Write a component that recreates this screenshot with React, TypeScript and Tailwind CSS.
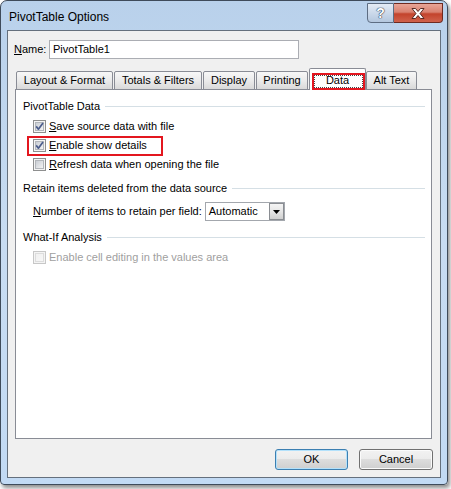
import React from "react";

interface CheckProps {
  checked?: boolean;
  disabled?: boolean;
  id: string;
}

const Check = ({ checked = false, disabled = false, id }: CheckProps) => (
  <svg width="13" height="13" viewBox="0 0 13 13" className="shrink-0">
    <defs>
      <linearGradient id={id} x1="0" y1="0" x2="1" y2="1">
        <stop offset="0" stopColor={disabled ? "#f0f0f0" : "#c6cbd2"} />
        <stop offset="1" stopColor={disabled ? "#f7f7f7" : "#f6f6f6"} />
      </linearGradient>
    </defs>
    <rect x="0.5" y="0.5" width="12" height="12" fill="#f4f4f4" stroke={disabled ? "#c7c7c7" : "#8e8f8f"} />
    <rect x="2.5" y="2.5" width="8" height="8" fill={`url(#${id})`} stroke={disabled ? "#dcdcdc" : "#b2b6bb"} />
    {checked && (
      <path d="M3.2 6.4 L5.4 9.2 L10 3" stroke="#4a5c8c" strokeWidth="1.7" fill="none" strokeLinejoin="round" />
    )}
  </svg>
);

const Group = ({ title, className = "" }: { title: string; className?: string }) => (
  <div className={`flex items-center h-[14px] pl-[7px] pr-[6px] ${className}`}>
    <span className="whitespace-nowrap">{title}</span>
    <div className="ml-[5px] flex-1 h-px bg-[#d5dfe5]" />
  </div>
);

const Tab = ({ label, w, className = "" }: { label: string; w: string; className?: string }) => (
  <div
    className={`${w} h-[19px] border border-[#898c95] rounded-t-[2px] bg-gradient-to-b from-[#f7f7f7] via-[#ebebeb] to-[#d9d9d9] flex items-center justify-center ${className}`}
  >
    {label}
  </div>
);

export default function App() {
  return (
    <div className="w-[451px] h-[489px] bg-white font-['Liberation_Sans',Arial,sans-serif] text-[11px] text-black leading-none">
      <div className="w-[448px] h-[485px] rounded-t-[7px] rounded-b-[4px] border border-[#3f4b5a] bg-gradient-to-b from-[#b9d1eb] via-[#c8dcf2] to-[#c2daf4] shadow-[2px_3px_4px_rgba(0,0,0,0.45)] flex flex-col">
        {/* title bar */}
        <div className="h-[29px] flex items-start shrink-0">
          <span className="mt-[10px] ml-[8px] text-[12px]">PivotTable Options</span>
          <div className="ml-auto mr-[4px] mt-[2px] flex">
            <div className="w-[27px] h-[20px] border border-[#5d6d82] rounded-bl-[4px] bg-gradient-to-b from-[#e4ecf6] via-[#cbd9ea] to-[#b4c7de] flex items-center justify-center">
              <span className="text-white font-bold text-[14px] [text-shadow:0_0_1px_#2b3a4e,0_0_1px_#2b3a4e,0_0_1px_#2b3a4e]">?</span>
            </div>
            <div className="w-[49px] h-[20px] border border-l-0 border-[#6e2a20] rounded-br-[4px] bg-[linear-gradient(to_bottom,#e8a597_0%,#d98170_45%,#c3432c_55%,#d0624c_100%)] flex items-center justify-center">
              <svg width="16" height="13" viewBox="0 0 16 13">
                <path
                  d="M2 1.5 H5.5 L8 4.5 L10.5 1.5 H14 L10 6.5 L14 11.5 H10.5 L8 8.5 L5.5 11.5 H2 L6 6.5 Z"
                  fill="#ffffff"
                  stroke="#4a1c16"
                  strokeWidth="0.9"
                  strokeLinejoin="round"
                />
              </svg>
            </div>
          </div>
        </div>

        {/* client area */}
        <div className="flex-1 flex flex-col px-[6px] pb-[6px]">
          <div className="flex-1 border border-[#65707d] bg-[#f0f0f0] flex flex-col">
            <div className="mt-[9px] flex items-center h-[19px] pl-[6px]">
              <span className="w-[35px]">
                <span className="underline">N</span>ame:
              </span>
              <div className="w-[250px] h-[19px] border border-[#abadb3] bg-white flex items-center pl-[3px]">
                PivotTable1
              </div>
            </div>

            {/* tabs */}
            <div className="mt-[9px] -mb-px h-[22px] flex items-end gap-[1px] pl-[8px] relative z-10">
              <Tab label="Layout & Format" w="w-[97px]" />
              <Tab label="Totals & Filters" w="w-[88px]" />
              <Tab label="Display" w="w-[52px]" />
              <Tab label="Printing" w="w-[52px]" />
              <div className="relative w-[57px] h-[22px] border border-b-0 border-[#898c95] rounded-t-[2px] bg-white flex items-center justify-center pt-[2px]">
                Data
                <div className="absolute left-[2px] top-[4px] w-[53px] h-[17px] border-2 border-[#e3161f]">
                  <div className="w-full h-full border border-dotted border-[#444]" />
                </div>
              </div>
              <Tab label="Alt Text" w="w-[51px]" className="-ml-[1px]" />
            </div>

            {/* panel */}
            <div className="ml-[7px] w-[417px] h-[350px] border border-[#898c95] bg-white pt-[9px] shrink-0">
              <Group title="PivotTable Data" />
              <div className="mt-[4px]">
                <div className="flex items-center h-[19px] pl-[17px]">
                  <Check checked id="c1" />
                  <span className="ml-[3px]">
                    <span className="underline">S</span>ave source data with file
                  </span>
                </div>
                <div className="relative flex items-center h-[19px] pl-[17px]">
                  <Check checked id="c2" />
                  <span className="ml-[3px]">
                    <span className="underline">E</span>nable show details
                  </span>
                  <div className="absolute left-[11px] top-0 w-[136px] h-[20px] border-2 border-[#e3161f]" />
                </div>
                <div className="flex items-center h-[19px] pl-[17px]">
                  <Check id="c3" />
                  <span className="ml-[3px]">
                    <span className="underline">R</span>efresh data when opening the file
                  </span>
                </div>
              </div>

              <Group title="Retain items deleted from the data source" className="mt-[7px]" />
              <div className="mt-[7px] flex items-center h-[19px] pl-[17px]">
                <span className="whitespace-nowrap">
                  <span className="underline">N</span>umber of items to retain per field:
                </span>
                <div className="ml-[3px] w-[80px] h-[19px] border border-[#a3a7ad] bg-white flex items-center">
                  <span className="pl-[3px] flex-1">Automatic</span>
                  <div className="w-[15px] h-[17px] border border-[#8a8d92] bg-gradient-to-b from-[#f4f4f4] via-[#e6e6e6] to-[#cfcfcf] flex items-center justify-center">
                    <svg width="7" height="4" viewBox="0 0 7 4">
                      <path d="M0 0 H7 L3.5 4 Z" fill="#000" />
                    </svg>
                  </div>
                </div>
              </div>

              <Group title="What-If Analysis" className="mt-[9px]" />
              <div className="mt-[4px] flex items-center h-[19px] pl-[17px]">
                <Check disabled id="c4" />
                <span className="ml-[3px] text-[#a0a0a0]">Enable cell editing in the values area</span>
              </div>
            </div>

            {/* buttons */}
            <div className="mt-[10px] flex justify-end gap-[11px] pr-[7px]">
              <div className="w-[73px] h-[21px] rounded-[3px] border border-[#3c7fb1] shadow-[inset_0_0_0_1px_#b3e1fb] bg-[linear-gradient(to_bottom,#f2f2f2_0%,#ebebeb_50%,#dddddd_50%,#cfcfcf_100%)] flex items-center justify-center">
                OK
              </div>
              <div className="w-[74px] h-[21px] rounded-[3px] border border-[#707070] shadow-[inset_0_0_0_1px_#fbfbfb] bg-[linear-gradient(to_bottom,#f2f2f2_0%,#ebebeb_50%,#dddddd_50%,#cfcfcf_100%)] flex items-center justify-center">
                Cancel
              </div>
            </div>
          </div>
        </div>
      </div>
    </div>
  );
}
